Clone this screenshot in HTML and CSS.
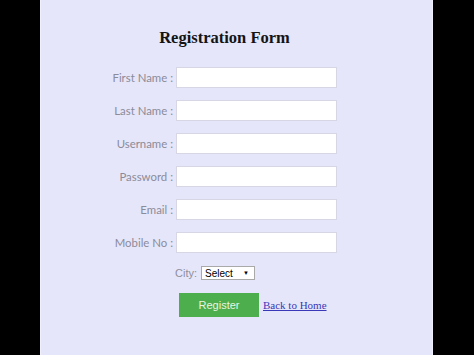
FILE: index.html
```html
<!DOCTYPE html>
<html>
<head>
<meta charset="utf-8">
<link rel="stylesheet" href="styles.css">
</head>
<body>
<div class="panel">
  <h1 class="title">Registration Form</h1>
  <form class="form">
    <div class="row"><label class="lbl">First Name :</label><input class="field" type="text"></div>
    <div class="row"><label class="lbl">Last Name :</label><input class="field" type="text"></div>
    <div class="row"><label class="lbl">Username :</label><input class="field" type="text"></div>
    <div class="row"><label class="lbl">Password :</label><input class="field" type="password"></div>
    <div class="row"><label class="lbl">Email :</label><input class="field" type="text"></div>
    <div class="row"><label class="lbl">Mobile No :</label><input class="field" type="text"></div>
    <div class="city-row">
      <span class="city-lbl">City:</span>
      <span class="select">Select<span class="arrow">&#9660;</span></span>
    </div>
    <div class="actions">
      <button type="button" class="btn">Register</button>
      <a href="#" class="back">Back to Home</a>
    </div>
  </form>
</div>
</body>
</html>
```
FILE: styles.css
```css
html, body {
  margin: 0;
  padding: 0;
  background: #000;
  height: 100%;
}
.panel {
  box-sizing: border-box;
  width: 393px;
  height: 355px;
  margin-left: 40px;
  background: #e6e6fa;
  border-left: 1px solid #f0f0fc;
  border-right: 1px solid #f0f0fc;
  padding-top: 28px;
}
.title {
  margin: 0;
  font-family: "Liberation Serif", "Times New Roman", serif;
  font-weight: bold;
  font-size: 16.5px;
  line-height: 20px;
  color: #141414;
  text-align: center;
  padding-right: 24px;
}
.form {
  display: flex;
  flex-direction: column;
  margin-top: 19px;
}
.row {
  display: flex;
  align-items: center;
  height: 21px;
  margin-bottom: 12px;
}
.lbl {
  box-sizing: border-box;
  width: 135px;
  padding-right: 3px;
  text-align: right;
  font-family: Lato, "Noto Sans", sans-serif;
  font-size: 11.4px;
  color: #8b8b99;
}
.field {
  box-sizing: border-box;
  width: 161px;
  height: 21px;
  margin: 0;
  padding: 0;
  border: 1px solid #d6d6e4;
  background: #fff;
  outline: none;
}
.city-row {
  display: flex;
  align-items: center;
  height: 14px;
  margin-left: 134px;
  margin-top: 1px;
}
.city-lbl {
  font-family: "Liberation Sans", Arial, sans-serif;
  font-size: 11px;
  color: #8e8e9a;
  margin-right: 4px;
}
.select {
  box-sizing: border-box;
  display: flex;
  align-items: center;
  justify-content: space-between;
  width: 54px;
  height: 14px;
  padding: 0 5px 0 3px;
  background: #fff;
  border: 1px solid #a9a9a9;
  font-family: "Liberation Sans", Arial, sans-serif;
  font-size: 10px;
  color: #000;
}
.arrow {
  font-size: 6px;
}
.actions {
  display: flex;
  align-items: center;
  margin-left: 138px;
  margin-top: 13px;
}
.btn {
  width: 80px;
  height: 24px;
  margin: 0 4px 0 0;
  padding: 0;
  border: none;
  background: #4cae4c;
  color: #e8f5e0;
  font-family: "Liberation Sans", Arial, sans-serif;
  font-size: 11px;
}
.back {
  font-family: "Liberation Serif", "Times New Roman", serif;
  font-size: 11px;
  color: #3838b8;
  text-decoration: underline;
}
```
